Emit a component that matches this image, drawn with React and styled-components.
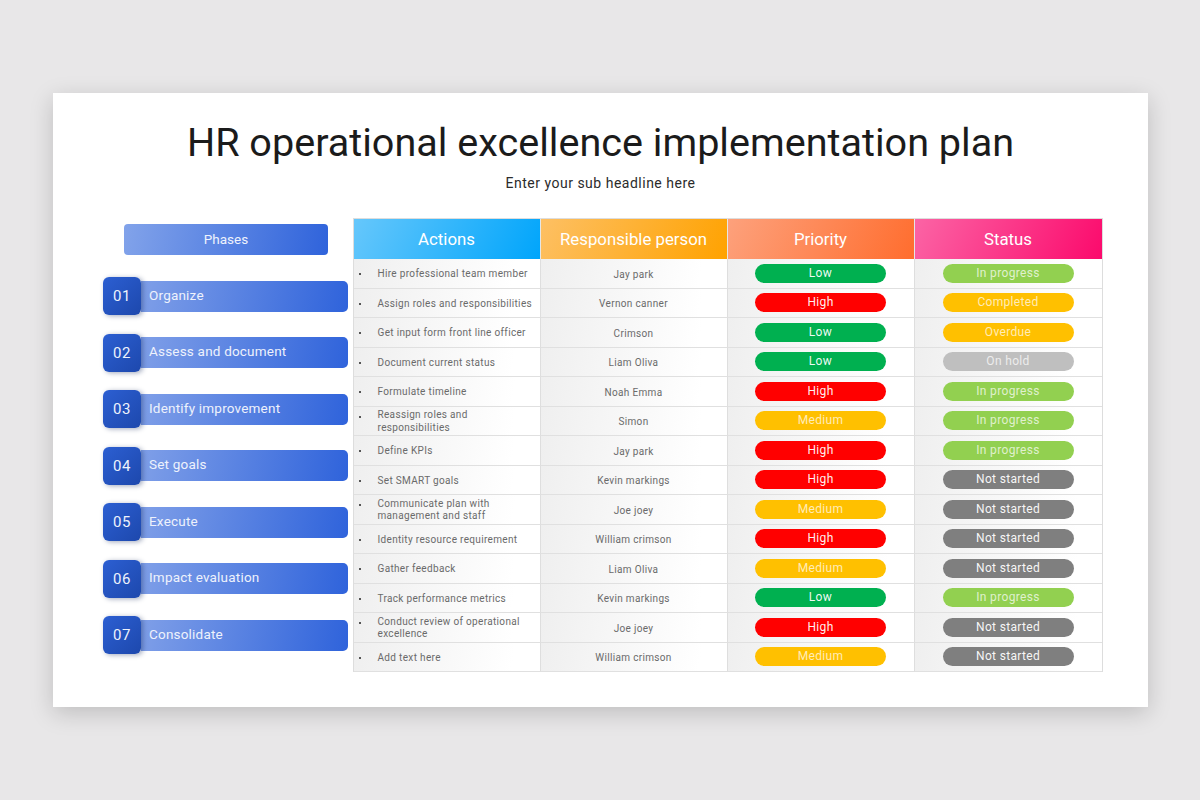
import React from "react";
import styled, { createGlobalStyle } from "styled-components";

const phases = [
  "Organize",
  "Assess and document",
  "Identify improvement",
  "Set goals",
  "Execute",
  "Impact evaluation",
  "Consolidate",
];

const pillColors = {
  Low: "#00b050",
  High: "#ff0000",
  Medium: "#ffc000",
  "In progress": "#92d050",
  Completed: "#ffc000",
  Overdue: "#ffc000",
  "On hold": "#bfbfbf",
  "Not started": "#7f7f7f",
};

const rows = [
  ["Hire professional team member", "Jay park", "Low", "In progress"],
  ["Assign roles and responsibilities", "Vernon canner", "High", "Completed"],
  ["Get input form front line officer", "Crimson", "Low", "Overdue"],
  ["Document current status", "Liam Oliva", "Low", "On hold"],
  ["Formulate timeline", "Noah Emma", "High", "In progress"],
  ["Reassign roles and responsibilities", "Simon", "Medium", "In progress"],
  ["Define KPIs", "Jay park", "High", "In progress"],
  ["Set SMART goals", "Kevin markings", "High", "Not started"],
  ["Communicate plan with management and staff", "Joe joey", "Medium", "Not started"],
  ["Identity resource requirement", "William crimson", "High", "Not started"],
  ["Gather feedback", "Liam Oliva", "Medium", "Not started"],
  ["Track performance metrics", "Kevin markings", "Low", "In progress"],
  ["Conduct review of operational excellence", "Joe joey", "High", "Not started"],
  ["Add text here", "William crimson", "Medium", "Not started"],
];

const headers = [
  { label: "Actions", from: "#66c7fb", to: "#00a5fb" },
  { label: "Responsible person", from: "#fdc064", to: "#ffa200" },
  { label: "Priority", from: "#fda17c", to: "#ff6d2e" },
  { label: "Status", from: "#fb64a5", to: "#fb0a6c" },
];

const GlobalStyle = createGlobalStyle`
  html, body {
    margin: 0;
    padding: 0;
    background: #e8e7e8;
    font-family: Roboto, "Liberation Sans", sans-serif;
  }
`;

const Page = styled.div`
  width: 1200px;
  height: 800px;
  padding: 93px 52px 93px 53px;
  box-sizing: border-box;
  overflow: hidden;
`;

const Slide = styled.div`
  height: 614px;
  background: #fff;
  box-shadow: 0 6px 22px rgba(0, 0, 0, 0.18);
  box-sizing: border-box;
  padding-top: 26px;
`;

const Title = styled.h1`
  margin: 0;
  text-align: center;
  font-size: 39.6px;
  line-height: 48px;
  font-weight: 400;
  color: #1b1b1b;
`;

const SubTitle = styled.p`
  margin: 8px 0 0;
  text-align: center;
  font-size: 14px;
  line-height: 16px;
  letter-spacing: 0.5px;
  color: #2b2b2b;
`;

const Body = styled.div`
  display: flex;
  align-items: flex-start;
  gap: 4.5px;
  margin-top: 27px;
  padding-left: 50px;
`;

const PhaseColumn = styled.div`
  width: 245px;
  display: flex;
  flex-direction: column;
`;

const PhasesButton = styled.div`
  width: 204px;
  height: 31px;
  margin: 6px 0 22px 21px;
  border-radius: 4px;
  background: linear-gradient(100deg, #82a3ea, #2f63db);
  color: #eef2fc;
  font-size: 13.5px;
  line-height: 31px;
  text-align: center;
`;

const PhaseList = styled.div`
  display: flex;
  flex-direction: column;
  gap: 18.5px;
`;

const PhaseRow = styled.div`
  display: flex;
  align-items: center;
  height: 38px;
`;

const PhaseNumber = styled.div`
  position: relative;
  z-index: 1;
  flex: none;
  width: 38px;
  height: 38px;
  border-radius: 6px;
  background: linear-gradient(135deg, #2c5fd2, #1d48ad);
  box-shadow: 2px 1px 5px rgba(20, 40, 90, 0.4);
  color: #eef2fc;
  font-size: 15px;
  letter-spacing: 0.6px;
  line-height: 38px;
  text-align: center;
`;

const PhaseBar = styled.div`
  flex: 1;
  height: 31px;
  border-radius: 0 5px 5px 0;
  background: linear-gradient(100deg, #7f9fe8, #2f63db);
  color: #eef2fc;
  font-size: 13.5px;
  letter-spacing: 0.2px;
  line-height: 29px;
  padding-left: 8px;
  box-sizing: border-box;
`;

const Table = styled.div`
  width: 750px;
  display: grid;
  grid-template-columns: repeat(4, 1fr);
  grid-template-rows: 41px repeat(14, 29.5px);
  border-left: 1px solid #dddddd;
  border-right: 1px solid #dddddd;
  box-sizing: border-box;
`;

const HeadCell = styled.div`
  display: flex;
  align-items: center;
  justify-content: center;
  background: linear-gradient(115deg, ${({ $from }) => $from}, ${({ $to }) => $to});
  border-right: 1px solid #e6e6e6;
  border-top: 1px solid #dddddd;
  box-sizing: border-box;
  color: #fff;
  font-size: 16.8px;
  &:nth-child(4) {
    border-right: none;
  }
`;

const Cell = styled.div`
  display: flex;
  align-items: center;
  justify-content: center;
  min-width: 0;
  background: linear-gradient(100deg, #efefef, #ffffff 85%);
  border-right: 1px solid #dedede;
  border-bottom: 1.5px solid #e0e0e0;
  box-sizing: border-box;
  color: #6a6a6a;
  font-size: 10px;
  letter-spacing: 0.33px;
  &:nth-child(4n) {
    border-right: none;
  }
`;

const TextCell = styled(Cell)`
  padding-top: 2px;
`;

const ActionCell = styled(TextCell)`
  justify-content: flex-start;
  line-height: 12.5px;
  padding-left: 24px;
  position: relative;
  &::before {
    content: "";
    position: absolute;
    left: 5px;
    top: ${({ $wrapped }) => ($wrapped ? "9px" : "14px")};
    width: 2px;
    height: 2px;
    background: #555;
  }
`;

const ActionText = styled.span`
  display: block;
  max-width: 156px;
`;

const Pill = styled.div`
  width: 131px;
  height: 19px;
  border-radius: 9.5px;
  background: ${({ $color }) => $color};
  color: rgba(255, 255, 255, ${({ $muted }) => ($muted ? 0.72 : 0.95)});
  font-size: 12px;
  line-height: 18px;
  text-align: center;
`;

const wrappedRows = [5, 8, 12];

const App = () => (
  <Page>
    <GlobalStyle />
    <Slide>
      <Title>HR operational excellence implementation plan</Title>
      <SubTitle>Enter your sub headline here</SubTitle>
      <Body>
        <PhaseColumn>
          <PhasesButton>Phases</PhasesButton>
          <PhaseList>
            {phases.map((name, i) => (
              <PhaseRow key={name}>
                <PhaseNumber>{String(i + 1).padStart(2, "0")}</PhaseNumber>
                <PhaseBar>{name}</PhaseBar>
              </PhaseRow>
            ))}
          </PhaseList>
        </PhaseColumn>
        <Table>
          {headers.map((h) => (
            <HeadCell key={h.label} $from={h.from} $to={h.to}>
              {h.label}
            </HeadCell>
          ))}
          {rows.map((row, i) => (
            <React.Fragment key={i}>
              <ActionCell $wrapped={wrappedRows.includes(i)}>
                <ActionText>{row[0]}</ActionText>
              </ActionCell>
              <TextCell>{row[1]}</TextCell>
              <Cell>
                <Pill $color={pillColors[row[2]]} $muted={row[2] === "Medium"}>
                  {row[2]}
                </Pill>
              </Cell>
              <Cell>
                <Pill
                  $color={pillColors[row[3]]}
                  $muted={row[3] !== "Not started"}
                >
                  {row[3]}
                </Pill>
              </Cell>
            </React.Fragment>
          ))}
        </Table>
      </Body>
    </Slide>
  </Page>
);

export default App;
